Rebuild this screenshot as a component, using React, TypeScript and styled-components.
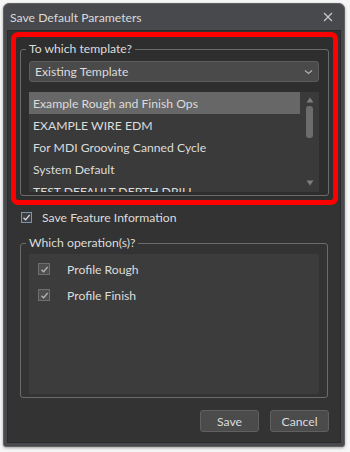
import React from "react";
import styled, { createGlobalStyle } from "styled-components";

const GlobalStyle = createGlobalStyle`
  html, body {
    margin: 0;
    padding: 0;
    background: #f6f6f6;
  }
  body {
    font-family: Lato, "Open Sans", sans-serif;
    font-size: 12px;
  }
`;

const Page = styled.div`
  width: 350px;
  height: 452px;
  padding: 3px;
  box-sizing: border-box;
  overflow: hidden;
`;

const Window = styled.div`
  width: 342px;
  height: 444px;
  box-sizing: border-box;
  display: flex;
  flex-direction: column;
  background: #48494d;
  border: 1px solid #5f6064;
  border-radius: 6px 6px 3px 3px;
  padding: 0 3px 3px;
  box-shadow: 0 1px 3px rgba(0, 0, 0, 0.35);
`;

const TitleBar = styled.div`
  height: 26px;
  flex: none;
  display: flex;
  align-items: center;
  justify-content: space-between;
  padding: 0 8px 0 3px;
`;

const Title = styled.span`
  font-size: 12.2px;
  color: #dadada;
`;

const CloseButton = styled.button`
  border: 0;
  background: none;
  padding: 0;
  width: 10px;
  height: 10px;
  display: flex;
  cursor: pointer;
`;

const Body = styled.div`
  flex: 1;
  display: flex;
  flex-direction: column;
  background: #333333;
  border: 1px solid #2a2a2a;
`;

const Highlight = styled.div`
  margin: 1px 2px 0 3px;
  border: 5px solid #ff0000;
  border-radius: 7px;
  background: #2e2e2e;
  padding: 4px;
`;

const Group = styled.fieldset<{ $padRight: number }>`
  margin: 0;
  padding: ${(p) => `3px ${p.$padRight}px 3px 8px`};
  border: 1px solid #6b6b6b;
  border-radius: 3px;
  min-width: 0;
`;

const GroupOps = styled(Group)`
  margin: 12px 12px 0 12px;
`;

const Legend = styled.legend`
  padding: 0 3px;
  margin-left: -3px;
  font-size: 12.2px;
  line-height: 16px;
  color: #dcdcdc;
`;

const Select = styled.div`
  margin-top: 1px;
  height: 21px;
  box-sizing: border-box;
  display: flex;
  align-items: center;
  justify-content: space-between;
  padding: 0 5px 0 5px;
  background: #4a4a4a;
  border: 1px solid #5c5c5c;
  border-radius: 3px;
  font-size: 12.2px;
  color: #dcdcdc;
`;

const ListBox = styled.div`
  margin-top: 10px;
  height: 100px;
  display: flex;
  background: #3a3a3a;
  overflow: hidden;
`;

const Rows = styled.div`
  flex: 1;
  min-width: 0;
`;

const Row = styled.div<{ $selected?: boolean }>`
  height: 22px;
  display: flex;
  align-items: center;
  padding-left: 4px;
  white-space: nowrap;
  font-size: 12.2px;
  color: #dcdcdc;
  background: ${(p) => (p.$selected ? "#676767" : "transparent")};
`;

const ScrollBar = styled.div`
  width: 19px;
  flex: none;
  display: flex;
  flex-direction: column;
  align-items: center;
  padding: 5px 0 6px;
  box-sizing: border-box;
`;

const Thumb = styled.div`
  width: 7px;
  height: 32px;
  margin-top: 3px;
  border-radius: 3px;
  background: #6c6c6c;
`;

const Spacer = styled.div`
  flex: 1;
`;

const CheckRow = styled.label<{ $gap: number }>`
  display: flex;
  align-items: center;
  gap: ${(p) => p.$gap}px;
  font-size: 12.2px;
  color: #dcdcdc;
`;

const FeatureRow = styled(CheckRow)`
  margin: 6px 0 0 13px;
  height: 12px;
`;

const Box = styled.span<{ $size: number; $accent?: boolean }>`
  width: ${(p) => p.$size}px;
  height: ${(p) => p.$size}px;
  box-sizing: border-box;
  flex: none;
  display: flex;
  align-items: center;
  justify-content: center;
  border: 1px solid ${(p) => (p.$accent ? "#7f93aa" : "#6e6e6e")};
  background: ${(p) => (p.$accent ? "#3b3e43" : "#4e4e4e")};
`;

const OpsPanel = styled.div`
  height: 140px;
  box-sizing: border-box;
  padding: 2px 0 0 9px;
  background: #3c3c3c;
`;

const OpRow = styled(CheckRow)`
  height: 26px;
`;

const Footer = styled.div`
  display: flex;
  justify-content: flex-end;
  gap: 11px;
  margin: 12px 11px 0 0;
`;

const Button = styled.button`
  width: 59px;
  height: 22px;
  padding: 0;
  background: #4b4b4b;
  border: 1px solid #606060;
  border-radius: 3px;
  font-family: inherit;
  font-size: 12.2px;
  color: #dcdcdc;
`;

const Check = ({ color }: { color: string }) => (
  <svg width="9" height="9" viewBox="0 0 9 9">
    <polyline
      points="1.5,4.8 3.6,6.8 7.6,2"
      fill="none"
      stroke={color}
      strokeWidth="1.3"
    />
  </svg>
);

const templates = [
  "Example Rough and Finish Ops",
  "EXAMPLE WIRE EDM",
  "For MDI Grooving Canned Cycle",
  "System Default",
  "TEST DEFAULT DEPTH DRILL",
];

const operations = ["Profile Rough", "Profile Finish"];

export default function App() {
  return (
    <Page>
      <GlobalStyle />
      <Window>
        <TitleBar>
          <Title>Save Default Parameters</Title>
          <CloseButton aria-label="Close">
            <svg width="10" height="10" viewBox="0 0 10 10">
              <path d="M1 1L9 9M9 1L1 9" stroke="#c8c8c8" strokeWidth="1.2" />
            </svg>
          </CloseButton>
        </TitleBar>
        <Body>
          <Highlight>
            <Group $padRight={9}>
              <Legend>To which template?</Legend>
              <Select>
                <span>Existing Template</span>
                <svg width="9" height="6" viewBox="0 0 9 6">
                  <polyline
                    points="1,1.5 4.5,4.5 8,1.5"
                    fill="none"
                    stroke="#b0b0b0"
                    strokeWidth="1.2"
                  />
                </svg>
              </Select>
              <ListBox>
                <Rows>
                  {templates.map((t, i) => (
                    <Row key={t} $selected={i === 0}>
                      {t}
                    </Row>
                  ))}
                </Rows>
                <ScrollBar>
                  <svg width="8" height="6" viewBox="0 0 8 6">
                    <polygon points="4,0.5 7.5,5.5 0.5,5.5" fill="#7e7e7e" />
                  </svg>
                  <Thumb />
                  <Spacer />
                  <svg width="8" height="6" viewBox="0 0 8 6">
                    <polygon points="0.5,0.5 7.5,0.5 4,5.5" fill="#7e7e7e" />
                  </svg>
                </ScrollBar>
              </ListBox>
            </Group>
          </Highlight>

          <FeatureRow $gap={10}>
            <Box $size={11} $accent>
              <Check color="#d8d8d8" />
            </Box>
            Save Feature Information
          </FeatureRow>

          <GroupOps $padRight={8}>
            <Legend>Which operation(s)?</Legend>
            <OpsPanel>
              {operations.map((op) => (
                <OpRow key={op} $gap={17}>
                  <Box $size={12}>
                    <Check color="#b8b8b8" />
                  </Box>
                  {op}
                </OpRow>
              ))}
            </OpsPanel>
          </GroupOps>

          <Footer>
            <Button>Save</Button>
            <Button>Cancel</Button>
          </Footer>
        </Body>
      </Window>
    </Page>
  );
}
